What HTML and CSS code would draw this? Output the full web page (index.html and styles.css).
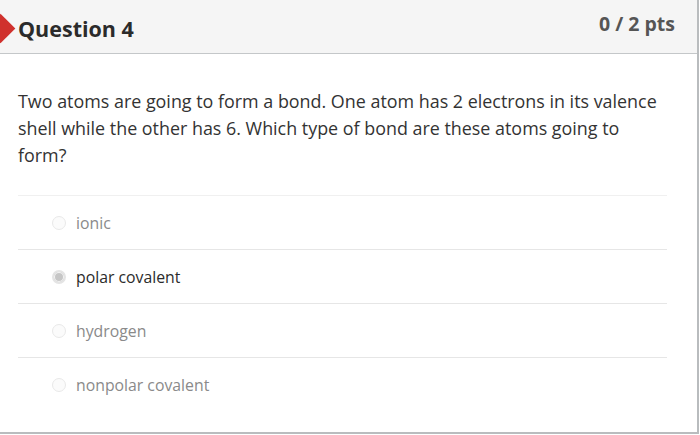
FILE: index.html
```html
<!DOCTYPE html>
<html>
<head>
<meta charset="utf-8">
<link rel="stylesheet" href="styles.css">
</head>
<body>
<div class="card">
  <div class="header">
    <span class="flag"></span>
    <h2 class="title">Question 4</h2>
    <span class="pts">0 / 2 pts</span>
  </div>
  <div class="body">
    <p class="text">Two atoms are going to form a bond. One atom has 2 electrons in its valence shell while the other has 6. Which type of bond are these atoms going to form?</p>
    <div class="answers">
      <div class="answer"><span class="radio"></span><span class="label">ionic</span></div>
      <div class="answer selected"><span class="radio"></span><span class="label">polar covalent</span></div>
      <div class="answer"><span class="radio"></span><span class="label">hydrogen</span></div>
      <div class="answer"><span class="radio"></span><span class="label">nonpolar covalent</span></div>
    </div>
  </div>
</div>
</body>
</html>
```
FILE: styles.css
```css
html, body { margin: 0; padding: 0; background: #fff; }
body { font-family: "Open Sans", "Liberation Sans", sans-serif; width: 700px; height: 435px; overflow: hidden; }
.card {
  width: 697px;
  height: 432px;
  border-right: 2px solid #b9bcbe;
  border-bottom: 2px solid #b9bcbe;
  position: relative;
  box-sizing: content-box;
}
.header {
  height: 53px;
  background: #f5f5f5;
  border-bottom: 1px solid #c4c7c9;
  display: flex;
  align-items: center;
  padding: 0 22px 0 18px;
  position: relative;
}
.flag {
  position: absolute;
  left: -10px;
  top: 18px;
  width: 21px;
  height: 21px;
  background: #d0312d;
  transform: rotate(45deg);
}
.title {
  margin: 0;
  font-size: 21.5px;
  font-weight: 700;
  color: #2b2b2b;
  flex: 1;
  padding-top: 4px;
}
.pts {
  font-size: 19.5px;
  font-weight: 700;
  color: #555;
  padding-bottom: 6px;
}
.body { padding: 0 30px 0 18px; }
.text {
  margin: 0;
  padding-top: 34px;
  font-size: 17.9px;
  line-height: 27px;
  color: #333;
}
.answers { margin-top: 26px; }
.answer {
  height: 53px;
  border-top: 1px solid #e6e6e6;
  display: flex;
  align-items: center;
  padding-left: 34px;
}
.answer:first-child { border-top-color: #f0f0f0; }
.radio {
  width: 14px;
  height: 14px;
  border-radius: 50%;
  border: 1px solid #e9e9e9;
  background: #fbfbfb;
  margin-right: 10px;
  box-sizing: border-box;
}
.selected .radio {
  border: 2px solid #e4e4e4;
  background: #c6c6c6;
  box-shadow: inset 0 0 0 1px #f4f4f4;
}
.label {
  font-size: 15.8px;
  color: #8a8a8a;
}
.selected .label { color: #2b2b2b; }
```
